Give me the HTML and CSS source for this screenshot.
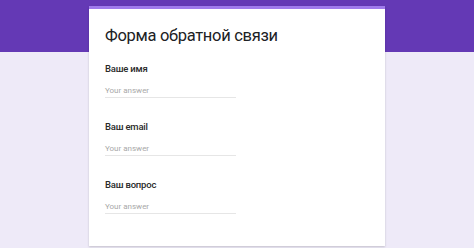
FILE: index.html
```html
<!DOCTYPE html>
<html lang="ru">
<head>
<meta charset="utf-8">
<link rel="stylesheet" href="styles.css">
</head>
<body>
<div class="page">
  <form class="card">
    <h1 class="title">Форма обратной связи</h1>
    <div class="question">
      <div class="label">Ваше имя</div>
      <div class="answer">Your answer</div>
    </div>
    <div class="question">
      <div class="label">Ваш email</div>
      <div class="answer">Your answer</div>
    </div>
    <div class="question">
      <div class="label">Ваш вопрос</div>
      <div class="answer">Your answer</div>
    </div>
  </form>
</div>
</body>
</html>
```

FILE: styles.css
```css
html, body {
  margin: 0;
  padding: 0;
}
body {
  width: 474px;
  height: 248px;
  overflow: hidden;
  font-family: Roboto, "Noto Sans", Arial, sans-serif;
  background: linear-gradient(#6439b5 0, #6439b5 52px, #eeeaf8 52px);
}
.page {
  display: flex;
  justify-content: center;
  padding-top: 6px;
}
.card {
  width: 296px;
  box-sizing: border-box;
  background: #fff;
  border-top: 3px solid #a07bec;
  padding: 15px 16px 32px;
  box-shadow: 0 1px 2px rgba(0, 0, 0, 0.18);
}
.title {
  margin: 0;
  font-size: 16.5px;
  line-height: 24px;
  font-weight: 400;
  letter-spacing: -0.3px;
  color: #202124;
}
.question {
  margin-top: 22px;
}
.question:first-of-type {
  margin-top: 14px;
}
.label {
  font-size: 9.5px;
  line-height: 14px;
  font-weight: 500;
  letter-spacing: -0.2px;
  color: #2a2a2a;
}
.answer {
  margin-top: 9px;
  width: 131px;
  font-size: 8px;
  line-height: 12px;
  color: #a8a8a8;
  border-bottom: 1px solid #e6e6e6;
}
```
